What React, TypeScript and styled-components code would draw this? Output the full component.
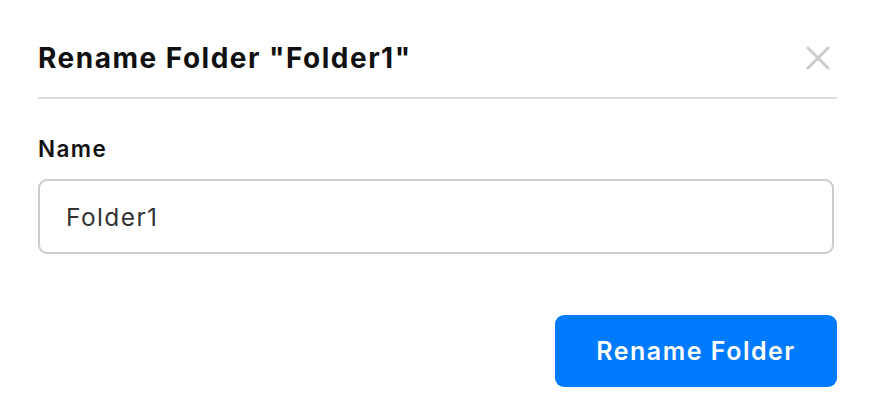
import styled, { createGlobalStyle } from "styled-components"

const GlobalStyle = createGlobalStyle`
  html, body {
    margin: 0;
    padding: 0;
    background: #ffffff;
  }
  body {
    font-family: Inter, "Noto Sans", "Liberation Sans", sans-serif;
    color: #111111;
  }
`

const Dialog = styled.div`
  width: 876px;
  height: 416px;
  box-sizing: border-box;
  padding: 0 39px 0 38px;
  display: flex;
  flex-direction: column;
`

const Header = styled.div`
  display: flex;
  align-items: center;
  justify-content: space-between;
  padding: 42px 0 23px;
  border-bottom: 2px solid #dddddd;
`

const Title = styled.h2`
  margin: 0;
  font-size: 28px;
  line-height: 32px;
  font-weight: 700;
  letter-spacing: 1.5px;
  color: #111111;
`

const CloseButton = styled.button`
  display: flex;
  align-items: center;
  justify-content: center;
  width: 28px;
  height: 28px;
  margin-right: 5px;
  padding: 0;
  border: none;
  background: none;
  color: #cccccc;
  cursor: pointer;
`

const Body = styled.div`
  display: flex;
  flex-direction: column;
  padding-top: 36px;
`

const Label = styled.label`
  font-size: 22.5px;
  line-height: 28px;
  font-weight: 600;
  letter-spacing: 1.4px;
  color: #111111;
  margin-bottom: 16px;
`

const Input = styled.input`
  box-sizing: border-box;
  width: 796px;
  height: 75px;
  padding: 0 26px;
  border: 2px solid #cccccc;
  border-radius: 9px;
  font-family: inherit;
  font-size: 24.5px;
  letter-spacing: 1.4px;
  color: #333333;
  outline: none;
`

const Footer = styled.div`
  display: flex;
  justify-content: flex-end;
  padding-top: 61px;
`

const PrimaryButton = styled.button`
  box-sizing: border-box;
  width: 282px;
  height: 72px;
  border: none;
  border-radius: 9px;
  background: #007aff;
  color: #ffffff;
  font-family: inherit;
  font-size: 25px;
  font-weight: 600;
  letter-spacing: 1.5px;
  cursor: pointer;
`

const App = () => {
  return (
    <>
      <GlobalStyle />
      <Dialog>
        <Header>
          <Title>Rename Folder "Folder1"</Title>
          <CloseButton aria-label="Close">
            <svg width="24" height="24" viewBox="0 0 24 24" fill="none" stroke="currentColor" strokeWidth="3" strokeLinecap="round">
              <path d="M2 2 L22 22 M22 2 L2 22" />
            </svg>
          </CloseButton>
        </Header>
        <Body>
          <Label htmlFor="folder-name">Name</Label>
          <Input id="folder-name" defaultValue="Folder1" />
        </Body>
        <Footer>
          <PrimaryButton>Rename Folder</PrimaryButton>
        </Footer>
      </Dialog>
    </>
  )
}

export default App
